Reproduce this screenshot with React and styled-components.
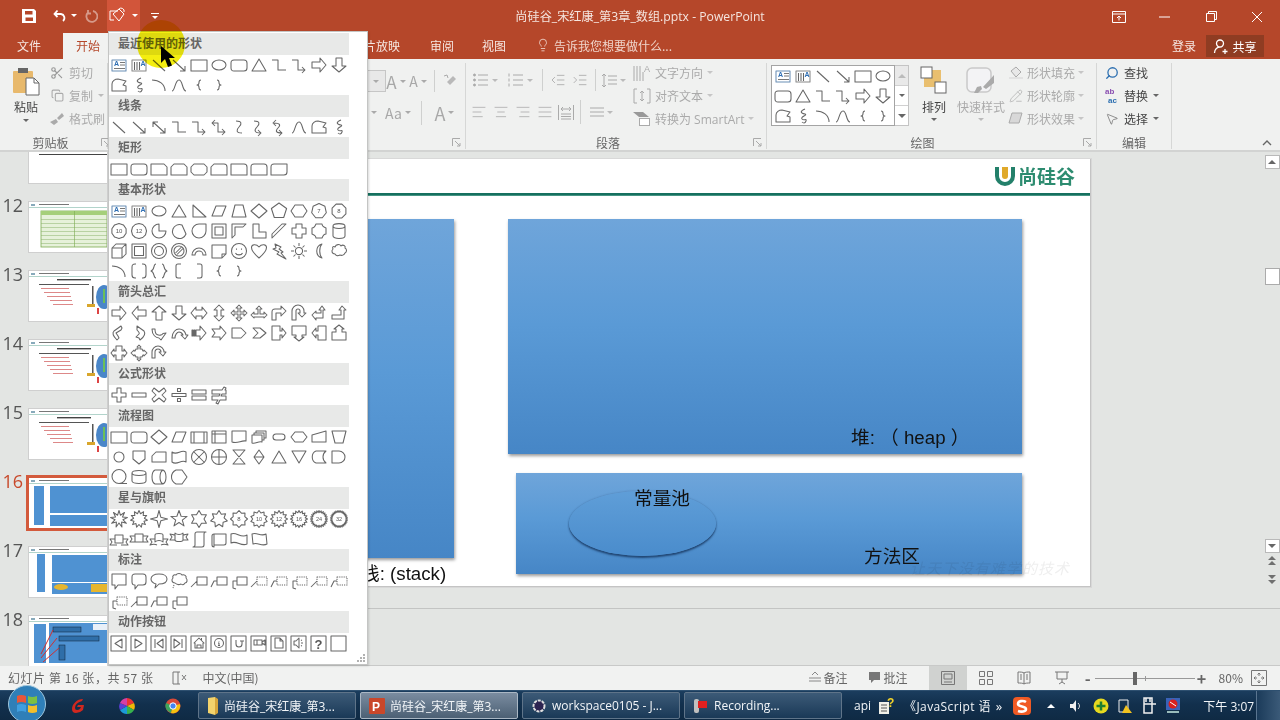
import React from 'react';
import styled, { createGlobalStyle } from 'styled-components';
import { AlignLeft, AlignCenter, AlignRight, AlignJustify, Scissors, Copy, Lightbulb, IndentDecrease, IndentIncrease, Search, MousePointer2, PencilLine } from 'lucide-react';

const CJK = '"Noto Sans CJK SC", "Liberation Sans", sans-serif';
const Global = createGlobalStyle`
  html, body { margin: 0; padding: 0; background: #e3e5e3; }
  * { box-sizing: border-box; }
  #root { width: 1280px; height: 720px; overflow: hidden; }
`;

/* ---------- geometry helpers for the shape glyphs ---------- */
const poly = (n, r = 7.5, rot = -90) => {
  const p = [];
  for (let i = 0; i < n; i++) {
    const a = ((rot + (360 / n) * i) * Math.PI) / 180;
    p.push(`${(10 + r * Math.cos(a)).toFixed(1)} ${(10 + r * Math.sin(a)).toFixed(1)}`);
  }
  return `M${p.join('L')}z`;
};
const star = (n, R = 8, r = 4.4) => {
  const p = [];
  for (let i = 0; i < n * 2; i++) {
    const a = ((-90 + (180 / n) * i) * Math.PI) / 180;
    const q = i % 2 ? r : R;
    p.push(`${(10 + q * Math.cos(a)).toFixed(1)} ${(10 + q * Math.sin(a)).toFixed(1)}`);
  }
  return `M${p.join('L')}z`;
};
const circ = (r, cx = 10, cy = 10) => `M${cx - r} ${cy}a${r} ${r} 0 1 0 ${r * 2} 0a${r} ${r} 0 1 0-${r * 2} 0z`;
const Num = ({ t, s = 6 }) => (
  <text x="10" y={10 + s * 0.36} fontSize={s} textAnchor="middle" fill="#555" stroke="none" fontFamily="Liberation Sans">{t}</text>
);
const withNum = (d, t, s) => (<><path d={d} /><Num t={t} s={s} /></>);
const dash = (solid, dashed) => (<><path d={solid} /><path d={dashed} strokeDasharray="1.2 1" /></>);

const textH = (
  <>
    <path d="M3 5h14v11H3z" stroke="#6b8fb5" />
    <text x="7.5" y="11" fontSize="7" fill="#2f6fb4" stroke="none" fontWeight="bold" textAnchor="middle" fontFamily="Liberation Sans">A</text>
    <path d="M11 7.5h5M11 10h5M5 13.5h11" stroke="#777" />
  </>
);
const textV = (
  <>
    <path d="M3 5h14v11H3z" stroke="#888" />
    <path d="M5.5 7v8M8 7v8M10.5 7v8" />
    <text x="14" y="11" fontSize="7" fill="#2f6fb4" stroke="none" fontWeight="bold" textAnchor="middle" fontFamily="Liberation Sans">A</text>
  </>
);

const S = {
  textH, textV,
  line: 'M4 5l12 11', arrow: 'M4 5l12 11m0-5v5h-5', dbl: 'M4 5l12 11m0-5v5h-5M4 10V5h5',
  elbow: 'M3 5h6v10h8', elbowA: 'M3 5h6v10h7m-3-3l3 3-3 3', elbowD: 'M6 3L3 6l3 3M3 6h6v9h7m-3-3l3 3-3 3',
  curveC: 'M7 4c6 0 6 3 3 6s-3 6 3 6', curveCA: 'M5 4c6 0 6 3 3 6s-3 6 4 6m-3-3l3 3-3 3',
  curveCD: 'M5 6c6 0 7 2 4 5s-2 5 4 5m-3-3l3 3-3 3M7 3L4 6l3 3',
  curve: 'M3 16c3 0 3-11 7-11s3 11 7 11', arc: 'M3 5c7 0 13 4 13 11',
  freeform: 'M3 16V9c0-3 3-5 6-5l8 2-3 4 3 1v5z', scribble: 'M12 3c-5 2-5 4 0 5 3 1-5 3-3 5s5-1 4 2-3 2-4 1',
  lbrace: 'M12 5c-2 0-2 1-2 2.500S10 10 8 10c2 0 2 1 2 2.500s0 2.500 2 2.500', rbrace: 'M8 5c2 0 2 1 2 2.500s0 2.500 2 2.500c-2 0-2 1-2 2.500s0 2.500-2 2.500',
  lbrack: 'M12 3H9Q7 3 7 5v10q0 2 2 2h3', rbrack: 'M8 3h3q2 0 2 2v10q0 2-2 2H8',
  bracks: 'M7 3H6Q3 3 3 6v8q0 3 3 3h1M13 3h1q3 0 3 3v8q0 3-3 3h-1',
  braces: 'M7 3C4 3 6 9 2 10c4 1 2 7 5 7M13 3c3 0 1 6 5 7-4 1-2 7-5 7',
  rect: 'M2 5h16v11H2z', round: 'M5 5h10q3 0 3 3v5q0 3-3 3H5q-3 0-3-3V8q0-3 3-3z',
  snip1: 'M2 5h13l3 3v8H2z', snip2: 'M5 5h10l3 3v8H2V8z', snipD: 'M5 5h10l3 3v5l-3 3H5l-3-3V8z', snipR: 'M5 5h10q3 0 3 3v8H2V8z',
  round1: 'M2 5h13q3 0 3 3v8H2z', round2: 'M5 5h10q3 0 3 3v8H2V8q0-3 3-3z', roundD: 'M5 5h13v8q0 3-3 3H2V8q0-3 3-3z',
  ellipse: 'M3 10a7 5 0 1 0 14 0a7 5 0 1 0-14 0z', tri: 'M10 4l7 12H3z', rtri: 'M4 4l13 12H4z', para: 'M7 5h10l-4 10H3z',
  trap: 'M6 4h8l3 12H3z', diamond: 'M10 3l8 7-8 7-8-7z', penta: poly(5, 8), hexa: 'M6 4h8l4 6-4 6H6l-4-6z',
  h7: withNum(poly(7, 7.5), '7'), o8: withNum(poly(8, 7.5, -67.5), '8'), d10: withNum(poly(10, 7.5), '10'), d12: withNum(poly(12, 7.5), '12'),
  pie: 'M10 3a7 7 0 1 0 7 7h-7z', chord: 'M13 4a7 7 0 1 0 4 9z', tear: 'M17 3v7a7 7 0 1 1-7-7z',
  frame: 'M3 3h14v14H3zM6 6v8h8V6z', half: 'M3 3h14l-3 3H6v8l-3 3z', lshape: 'M4 3h6v8h7v6H4z', diag: 'M3 13L13 3h4L3 17z',
  cross: 'M7 3h6v4h4v6h-4v4H7v-4H3V7h4z', plate: 'M7 3h6q0 2 2 3t2 1v6q-2 0-3 2t-1 2H7q0-2-2-3t-2-1V7q2 0 3-2t1-2z',
  can: 'M4 5a6 2.4 0 0 1 12 0v10a6 2.4 0 0 1-12 0zM4 5a6 2.4 0 0 0 12 0',
  cube: 'M3 7l4-4h10v10l-4 4H3zM3 7h10v10M13 7l4-4', bevel: 'M3 3h14v14H3zM5.5 5.5h9v9h-9z',
  donut: circ(7.5) + circ(4.5), nosym: circ(7.5) + circ(5) + 'M6.5 12l6-6M8 13.5l6-6',
  blockarc: 'M3 14a7 7 0 0 1 14 0h-3a4 4 0 0 0-8 0z', folded: 'M3 4h14v9l-4 4H3zM17 13h-4v4',
  smile: circ(7.5) + 'M6.5 12c1 2.5 6 2.5 7 0M7.5 7.5v1.2M12.5 7.5v1.2', heart: 'M10 17C3 11 2.5 8 2.5 6.5 2.5 3.5 7 2.5 10 6c3-3.5 7.500-2.500 7.500.5 0 1.500-.5 4.500-7.500 10.500z',
  bolt: 'M6 3l6 3-2 2 4 3-2 1 5 6-9-5 2-2-6-3 3-1z', sun: circ(3.6) + 'M10 2v3M10 15v3M2 10h3M15 10h3M4.500 4.500l2 2M13.500 13.500l2 2M4.500 15.500l2-2M13.500 6.500l2-2',
  moon: 'M13 3c-7 2-7 12 0 14-3-3-3-11 0-14z', cloud: 'M6 6c1-3 5-3 6-1 2-2 5 0 4 2 2 1 2 4 0 5-1 2-3 3-5 2-2 1-4 1-5-1-3 0-4-3-2-5-1-2 0-3 2-2z',
  aR: 'M3 7h8V3l6 7-6 7v-4H3z', aL: 'M17 7H9V3L3 10l6 7v-4h8z', aU: 'M7 17V9H3l7-6 7 6h-4v8z', aD: 'M7 3v8H3l7 6 7-6h-4V3z',
  aLR: 'M2 10l5-6v3h6V4l5 6-5 6v-3H7v3z', aUD: 'M10 2l5 5h-3v6h3l-5 5-5-5h3V7H5z',
  aQ: 'M10 2l3 3h-2v4h4V7l3 3-3 3v-2h-4v4h2l-3 3-3-3h2v-4H5v2l-3-3 3-3v2h4V5H7z', aLRU: 'M10 3l3 3h-2v5h4V9l3 3-3 3v-1H5v1l-3-3 3-3v2h4V6H7z',
  aBent: 'M3 17V9q0-3 3-3h6V3l5 5-5 5v-3H7v7z', aUt: 'M3 17V8a6 6 0 0 1 12 0v2h2l-4 4-4-4h2V8a2 2 0 0 0-4 0v9z',
  aLU: 'M3 12l4-4v2h5V7h-2l3-4 3 4h-2v8H7v2z', aBU: 'M3 12h9V7h-2l3-4 4 4h-2v9H3z',
  cR: 'M12 3L5 8c-2 2-1 5 3 9l2-2-1-2-2-3 5-3 1-2z', cL: 'M8 3l7 5c2 3 0 6-4 9l-1-2-3-1 3-3c1-1 0-2-2-4z',
  cU: 'M3 6c0 6 4 9 7 9l2 2 5-7-3 .5c-1 2-4 2-6 1S6 8 6 6z', cD: 'M3 15c0-6 4-9 7-9s6 2 7 6h2l-3 4-4-4h2c-1-2-2-3-4-3s-4 3-4 6z',
  sR: 'M3 7h1v6H3zM5 7h1v6H5zM7 7h4V3l6 7-6 7v-4H7z', nR: 'M3 6h8V3l6 7-6 7v-3H3l3-4z', home: 'M3 5h9l5 5-5 5H3z', chev: 'M4 5h7l6 5-6 5H4l5-5z',
  rC: 'M3 3h8v5h2V5l4 5-4 5v-3h-2v5H3z', dC: 'M3 3h14v9h-4v2h2l-5 4-5-4h2v-2H3z', lC: 'M17 3H9v5H7V5l-4 5 4 5v-3h2v5h8z', uC: 'M3 17h14V9h-4V6h2l-5-4-5 4h2v3H3z',
  lrC: 'M7 3h6v5h2V6l3 4-3 4v-2h-2v5H7v-5H5v2l-3-4 3-4v2h2z', qC: 'M10 2l2 2h-1v2h2l1 2h1V7l3 3-3 3v-1h-1l-1 2h-2v2h1l-2 2-2-2h1v-2H7l-1-2H5v1l-3-3 3-3v1h1l1-2h2V4H8z',
  circA: 'M3 15V9a6 6 0 0 1 12 0h2l-3 4-4-4h2a3 3 0 0 0-6 0v6z',
  eqP: 'M8 3h4v5h5v4h-5v5H8v-5H3V8h5z', eqM: 'M3 8h14v4H3z', eqX: 'M5 3l5 4 5-4 2 3-4 4 4 4-2 3-5-4-5 4-2-3 4-4-4-4z',
  eqD: 'M3 8.500h14v3H3zM8.500 3.500h3v3h-3zM8.500 13.500h3v3h-3z', eqE: 'M3 5h14v4H3zM3 11h14v4H3z', eqN: 'M3 5h10l2-3 2 1-1 2h1v4h-4l-1 2h5v4H11l-2 4-2-1 2-3H3v-4h7l1-2H3z',
  fPre: 'M2 5h16v11H2zM5 5v11M15 5v11', fInt: 'M3 4h14v12H3zM6 4v12M3 7h14', fDoc: 'M3 4h14v10c-5-1-8 3-14 1z',
  fMulti: 'M3 8h10v7c-4-1-6 2-10 1zM5 8V6h10v7h-2M7 6V4h10v7h-2', fTerm: 'M7 7h6a3 3 0 0 1 0 6H7a3 3 0 0 1 0-6z', fPrep: 'M6 5h8l4 5-4 5H6l-4-5z',
  fMI: 'M3 8l14-4v11H3z', fMO: 'M3 4h14l-3 12H6z', fConn: circ(5), fOff: 'M4 4h12v8l-6 5-6-5z', fCard: 'M7 5h10v10H3V9z',
  fTape: 'M3 5c5 4 9-3 14 0v10c-5-3-9 4-14 0z', fSum: circ(7.5) + 'M5 5l10 10M15 5L5 15', fOr: circ(7.5) + 'M10 2.500v15M2.500 10h15',
  fColl: 'M4 3h12L4 17h12z', fSort: 'M10 3l5 7-5 7-5-7zM5 10h10', fExt: 'M10 4l7 12H3z', fMrg: 'M3 4h14l-7 12z', fStore: 'M7 4h10c-4 3-4 9 0 12H7c-5-2-5-10 0-12z',
  fDelay: 'M3 4h7a6 6 0 0 1 0 12H3z', fSeq: circ(7, 10, 9.500) + 'M10 16.500h8', fDisk: 'M3 6a7 2.500 0 0 1 14 0v8a7 2.500 0 0 1-14 0zM3 6a7 2.500 0 0 0 14 0',
  fDirect: 'M6 3h8c4 2 4 12 0 14H6c-4-2-4-12 0-14zM14 3c-4 2-4 12 0 14', fDisp: 'M7 3h6l5 7-5 7H7c-6-3-6-11 0-14z',
  burst1: star(9, 8.500, 4), burst2: star(11, 8.500, 5.500), s4: star(4, 8.500, 2.500), s5: star(5, 8.500, 3.500), s6: star(6, 8.500, 5), s7: star(7, 8.500, 5.200),
  s8: withNum(star(8, 8.500, 6.300), '8'), s10: withNum(star(10, 8.500, 6.300), '10', 5.500), s12: withNum(star(12, 8.500, 6), '12', 5.500), s16: withNum(star(16, 8.500, 6.300), '16', 5.500), s24: withNum(star(24, 8.500, 6.500), '24', 5.500), s32: withNum(star(32, 8.500, 6.800), '32', 5.500),
  rU: 'M6 6h8v8H6zM6 10H1l2 3-2 3h7M14 10h5l-2 3 2 3h-7', rD: 'M6 5h8v8H6zM6 7H1l2 3-2 3h5M14 7h5l-2 3 2 3h-5',
  crU: 'M6 6c0-2 8-2 8 0v7c-2-2-6-2-8 0zM6 10H1l2 3-2 3c3-1 5-1 7 0M14 10h5l-2 3 2 3c-3-1-5-1-7 0', crD: 'M6 4c2 2 6 2 8 0v7c0 2-8 2-8 0zM6 6c-2 0-3-1-5-1l2 3-2 3h5M14 6c2 0 3-1 5-1l-2 3 2 3h-5',
  scrV: 'M6 5c0-2 1-2 2-2h9c-1 0-2 1-2 2v11c0 1-1 2-2 2H4c1 0 2-1 2-2z', scrH: 'M3 7c0-1 1-2 2-2h12v9c0 1-1 2-2 2H5v2c-1 0-2-1-2-2z M5 5v11',
  wave: 'M2 5c5-3 10 5 16 1v9c-6 3-10-4-16-1z', dwave: 'M3 5c5-2 9 3 14 0l1 10c-5 3-9-2-14 0z',
  cRect: 'M3 3h14v11H9l-3 4v-4H3z', cRnd: 'M6 3h8q3 0 3 3v5q0 3-3 3H9l-3 4v-4q-3 0-3-3V6q0-3 3-3z', cOval: 'M10 3c5 0 8 2 8 5s-3 5-8 5l-4 4 1-4c-3-1-5-2-5-5s3-5 8-5z',
  cCloud: dash('M6 12c-3 0-4-3-2-5-1-2 1-4 3-3 1-2 5-2 6 0 2-1 5 1 4 3 2 2 1 5-1 5-1 2-3 2-4 1-2 1-4 1-6-1z', 'M5 14l-1 3'),
  cL1: 'M8 6h10v8H8zM8 10l-6 6', cL2: 'M8 6h10v8H8zM8 10H5l-3 6', cL3: 'M8 6h10v8H8zM8 10H4v7l3 1',
  cD1: dash('M8 10l-6 6', 'M8 6h10v8H8z'), cD2: dash('M8 10H5l-3 6', 'M8 6h10v8H8z'), cD3: dash('M8 10H4v7l3 1', 'M8 6h10v8H8z'),
  btn: 'M2 3h15v15H2z',
  bBack: 'M2 3h15v15H2zM13 6v9L6 10.500z', bFwd: 'M2 3h15v15H2zM6 6v9l7-4.500z', bBeg: 'M2 3h15v15H2zM14 6v9L8 10.500zM6 6v9', bEnd: 'M2 3h15v15H2zM5 6v9l6-4.500zM13 6v9',
  bHome: 'M2 3h15v15H2zM10 5l-5 5h1v5h8v-5h1zM8 15v-3h4v3M12.500 5v2', bInfo: 'M2 3h15v15H2z' + circ(4.500) + 'M10 8v.6M9 10h1v2.200M9 12.500h2',
  bRet: 'M2 3h15v15H2zM7 7v4a3 3 0 0 0 6 0V8m-2 0h4', bMov: 'M2 3h15v15H2zM5 7h8v5H5zM13 9l3-2v5l-3-2M8 7v5', bDoc: 'M2 3h15v15H2zM6 5h5l3 3v7H6zM11 5v3h3',
  bSnd: 'M2 3h15v15H2zM5 8h2l3-3v10l-3-3H5zM12 7l1 .5M12 10h2M12 13l1-.5',
  bQ: (<><path d="M2 3h15v15H2z" /><text x="9.500" y="15.500" fontSize="13" fontWeight="bold" textAnchor="middle" fill="#555" stroke="none" fontFamily="Liberation Sans">?</text></>),
};

const sections = [
  ['最近使用的形状', 'textH textV line arrow rect ellipse round tri elbow elbowA aR aD freeform scribble arc curve lbrace rbrace'],
  ['线条', 'line arrow dbl elbow elbowA elbowD curveC curveCA curveCD curve freeform scribble'],
  ['矩形', 'rect round snip1 snip2 snipD snipR round1 round2 roundD'],
  ['基本形状', 'textH textV ellipse tri rtri para trap diamond penta hexa h7 o8 d10 d12 pie chord tear frame half lshape diag cross plate can cube bevel donut nosym blockarc folded smile heart bolt sun moon cloud arc bracks braces lbrack rbrack lbrace rbrace'],
  ['箭头总汇', 'aR aL aU aD aLR aUD aQ aLRU aBent aUt aLU aBU cR cL cU cD sR nR home chev rC dC lC uC lrC qC circA'],
  ['公式形状', 'eqP eqM eqX eqD eqE eqN'],
  ['流程图', 'rect round diamond para fPre fInt fDoc fMulti fTerm fPrep fMI fMO fConn fOff fCard fTape fSum fOr fColl fSort fExt fMrg fStore fDelay fSeq fDisk fDirect fDisp'],
  ['星与旗帜', 'burst1 burst2 s4 s5 s6 s7 s8 s10 s12 s16 s24 s32 rU rD crU crD scrV scrH wave dwave'],
  ['标注', 'cRect cRnd cOval cCloud cL1 cL2 cL3 cD1 cD2 cD3 cD1 cD2 cD3 cL1 cL2 cL3'],
  ['动作按钮', 'bBack bFwd bBeg bEnd bHome bInfo bRet bMov bDoc bSnd bQ btn'],
];

const Cell = styled.svg`
  width: 20px; height: 20px; display: block; flex: none;
  fill: none; stroke: #666; stroke-width: 1.05; stroke-linejoin: round;
`;
const Shape = ({ n }) => {
  const v = S[n];
  return <Cell viewBox="0 0 20 20">{typeof v === 'string' ? <path d={v} /> : v}</Cell>;
};

/* ---------- page frame ---------- */
const Page = styled.div`
  position: relative; width: 1280px; height: 720px; overflow: hidden;
  display: flex; flex-direction: column; font-family: ${CJK}; font-size: 12px; color: #444;
`;
const TitleBar = styled.div`
  height: 33px; background: #b5472a; display: grid; grid-template-columns: 1fr auto 1fr; align-items: start; color: #fff;
`;
const Qat = styled.div`display: flex; align-items: center; height: 31px; padding-left: 19px;`;
const QatBtn = styled.div`
  height: 31px; width: ${p => p.$w}px; display: flex; align-items: center; justify-content: center; gap: 4px;
  background: ${p => (p.$on ? '#d2553a' : 'transparent')}; opacity: ${p => (p.$dim ? 0.45 : 1)};
`;
const Caret = styled.i`
  display: inline-block; width: 0; height: 0; border-left: 3px solid transparent; border-right: 3px solid transparent;
  border-top: 3px solid ${p => p.$c || '#fff'}; flex: none; font-style: normal;
`;
const Title = styled.div`
  font-size: 12.2px; line-height: 33px; color: #f5e5df; white-space: nowrap; font-family: "Open Sans", ${CJK};
`;
const WinBtns = styled.div`display: flex; justify-content: flex-end; height: 33px; align-items: center;`;
const WinBtn = styled.div`width: 46px; display: flex; justify-content: center;`;

const TabBar = styled.div`height: 26px; background: #b5472a; display: flex; align-items: stretch; color: #f6e7e2;`;
const Tab = styled.div`
  width: ${p => p.$w}px; flex: none; display: flex; align-items: center; justify-content: center; font-size: 12px; padding-bottom: 2px;
  background: ${p => (p.$on ? '#f1f2f1' : 'transparent')}; color: ${p => (p.$on ? '#b5472a' : 'inherit')};
`;
const TellMe = styled.div`display: flex; align-items: center; gap: 4px; margin-left: 16px; font-size: 12px; color: #f0d5cb; padding-bottom: 2px;`;
const TabEnd = styled.div`margin-left: auto; display: flex; align-items: center; padding-right: 16px; gap: 10px;`;
const Login = styled.div`font-size: 12px; padding-bottom: 2px;`;
const Share = styled.div`
  width: 58px; height: 22px; display: flex; align-items: center; justify-content: center; gap: 3px; background: #8f3c22; color: #fff;
`;

/* ---------- ribbon ---------- */
const Ribbon = styled.div`
  position: relative; height: 93px; flex: none; background: #f0f1f0; border-bottom: 2px solid #d2d3d2; display: flex; padding: 4px 0 0;
`;
const Group = styled.div`
  position: relative; width: ${p => p.$w}px; flex: none; height: 86px; display: flex; flex-direction: column;
  border-right: 1px solid #d6d7d6;
`;
const GroupBody = styled.div`flex: 1; display: flex; min-height: 0; margin-top: -2px; justify-content: ${p => p.$end ? 'flex-end' : 'flex-start'}; padding: ${p => p.$pad || '0'};`;
const GroupLabel = styled.div`
  height: 16px; line-height: 16px; margin-bottom: -2px; text-align: center; color: #666; font-size: 12px; padding-right: ${p => p.$pr || 0}px;
`;
const Launcher = styled.svg`position: absolute; right: ${p => p.$r ?? 4}px; bottom: 2px; width: 9px; height: 9px; stroke: #aaa; fill: none;`;
const Big = styled.div`
  width: ${p => p.$w}px; flex: none; padding-top: 2px; margin-left: ${p => p.$ml || 0}px; display: flex; flex-direction: column; align-items: center; color: ${p => p.$c || '#444'}; font-size: 12px;
`;
const BigLabel = styled.div`line-height: 14px; margin-top: ${p => p.$mt || 4}px; white-space: nowrap;`;
const BigCaret = styled.div`margin-top: ${p => p.$mt || 5}px; height: 6px; display: flex;`;
const Col = styled.div`display: flex; flex-direction: column; width: ${p => p.$w ? p.$w + 'px' : 'auto'}; flex: none; margin-left: ${p => p.$ml || 0}px; padding-top: ${p => p.$pt || 0}px;`;
const SmallBtn = styled.div`
  height: 23px; display: flex; align-items: center; gap: ${p => p.$gap || 5}px; white-space: nowrap; color: ${p => p.$c || '#aaa'}; font-size: 12px;
`;
const SmallIcon = styled.div`width: ${p => p.$w || 16}px; display: flex; justify-content: center; flex: none;`;
const IconRow = styled.div`display: flex; align-items: center; height: ${p => p.$h || 32}px; color: #aaa; justify-content: ${p => p.$end ? 'flex-end' : 'flex-start'};`;
const IconBox = styled.div`width: ${p => p.$w}px; flex: none; display: flex; align-items: center; justify-content: center; gap: 3px; font-size: ${p => p.$fs || 12}px; color: #a8a8a8;`;
const Divider = styled.div`width: 1px; height: ${p => p.$h || 22}px; background: #cfd0cf; flex: none; margin: 0 ${p => p.$m || 4}px;`;
const ComboEnd = styled.div`
  width: 220px; height: 22px; background: #fff; border: 1px solid #c6c6c6; border-left: none; display: flex; justify-content: flex-end; flex: none;
`;
const ComboArrow = styled.div`width: 18px; background: #e8e8e8; display: flex; align-items: center; justify-content: center;`;
const GalleryWrap = styled.div`display: flex; margin: 4px 0 0 4px; height: 61px; flex: none;`;
const Gallery = styled.div`
  width: 124px; height: 61px; background: #fff; border: 1px solid #a4a4a4; display: flex; flex-wrap: wrap; align-content: flex-start; padding-left: 1px;
`;
const GalleryBar = styled.div`width: 14px; display: flex; flex-direction: column; background: #fff; border: 1px solid #c4c4c4; border-left: none;`;
const GalleryBtn = styled.div`
  flex: 1; display: flex; align-items: center; justify-content: center; border-bottom: 1px solid #d0d0d0; background: ${p => (p.$dim ? '#e9e9e9' : '#fff')};
  &:last-child { border-bottom: none; }
`;
const Collapse = styled.svg`position: absolute; right: 7px; bottom: 3px; width: 12px; height: 8px; fill: none; stroke: #666; stroke-width: 1.4;`;

/* ---------- main area ---------- */
const Main = styled.div`flex: 1; min-height: 0; display: flex; background: #e3e5e3;`;
const ThumbPane = styled.div`width: 108px; flex: none; overflow: hidden; border-right: 1px solid #d0d0d0;`;
const ThumbList = styled.div`margin-top: -19px;`;
const ThumbRow = styled.div`height: 69px; display: flex; align-items: flex-start;`;
const ThumbNum = styled.div`
  width: 23px; flex: none; margin-top: -9px; text-align: right; font: 18px/24px "Open Sans", sans-serif; color: ${p => (p.$on ? '#c8492b' : '#555')};
`;
const Thumb = styled.svg`
  width: 89px; height: 50px; flex: none; display: block; margin-left: 6px; background: #fff;
  outline: ${p => (p.$on ? '3px solid #d35a3c' : '1px solid #cfcfcf')}; outline-offset: 0;
`;
const SlideCol = styled.div`flex: 1; min-width: 0; display: flex; flex-direction: column;`;
const SlideRow = styled.div`height: 457px; flex: none; display: flex; border-bottom: 1px solid #c3c4c3;`;
const Stage = styled.div`flex: 1; min-width: 0; padding: 7px 0 0 221px;`;
const Slide = styled.div`
  position: relative; width: 762px; height: 428px; background: #fff; border-right: 1px solid #c4c4c4; border-bottom: 1px solid #c4c4c4; box-shadow: 0 0 0 1px #d8d8d8;
`;
const Rule = styled.div`position: absolute; left: 0; right: 0; top: 34px; height: 3px; background: linear-gradient(#16705f 0, #16705f 66%, #74b9a8 100%);`;
const Logo = styled.div`
  position: absolute; right: 15px; top: 5px; display: flex; align-items: center; gap: 2px; color: #2d8c70; font-size: 19px; font-weight: 700; line-height: 24px;
`;
const BlueBox = styled.div`
  position: absolute; left: ${p => p.$x}px; top: ${p => p.$y}px; width: ${p => p.$w}px; height: ${p => p.$h}px;
  background: linear-gradient(#6fa5da 0, #5a9ad6 45%, #4686c6 100%); box-shadow: 1px 2px 3px rgba(0,0,0,.4);
`;
const Ellipse = styled.div`
  position: absolute; left: 240px; top: 332px; width: 147px; height: 65px; border-radius: 50%;
  background: linear-gradient(#5f9ed8, #4a8ccc); box-shadow: 0 2px 2px rgba(20,50,90,.75), 0 0 2px rgba(30,60,100,.4);
`;
const SlideText = styled.div`
  position: absolute; left: ${p => p.$x}px; top: ${p => p.$y}px; font-family: "Liberation Sans", "Noto Sans CJK SC", sans-serif; font-size: 18.7px; line-height: 24px; color: #111; white-space: nowrap;
`;
const Watermark = styled.div`
  position: absolute; right: 20px; top: 399px; font-size: 15px; line-height: 20px; color: #efefef; mix-blend-mode: multiply; letter-spacing: 1px; font-style: italic; white-space: nowrap;
`;
const VBar = styled.div`width: 16px; flex: none; display: flex; flex-direction: column; align-items: center; padding-top: 3px;`;
const VBtn = styled.div`
  width: 15px; height: 14px; flex: none; background: #fff; border: 1px solid #b9b9b9; display: flex; align-items: center; justify-content: center;
`;
const VTrack = styled.div`flex: none; height: 370px; width: 15px; padding-top: 99px;`;
const VThumb = styled.div`width: 15px; height: 17px; background: #fff; border: 1px solid #ababab;`;
const VNav = styled.svg`width: 10px; height: 10px; fill: #707070; margin-top: ${p => p.$mt}px; flex: none;`;
const UpTri = styled.i`width: 0; height: 0; border-left: 4px solid transparent; border-right: 4px solid transparent; border-bottom: 4px solid ${p => p.$c || '#666'};`;
const DownTri = styled.i`width: 0; height: 0; border-left: 4px solid transparent; border-right: 4px solid transparent; border-top: 4px solid #666;`;
const Notes = styled.div`flex: 1; background: #e3e5e3; border-bottom: 1px solid #c8c9c8;`;

/* ---------- status bar ---------- */
const StatusBar = styled.div`height: 24px; flex: none; background: #f1f2f1; display: flex; align-items: center; color: #666; font-size: 12px;`;
const StatusText = styled.div`
  margin-left: ${p => p.$ml || 0}px; white-space: nowrap; display: flex; align-items: center; gap: 3px; font-family: ${CJK};
  letter-spacing: ${p => p.$ls || 0}px; padding-bottom: 1px;
`;
const ViewBtn = styled.div`
  width: 38px; height: 24px; display: flex; align-items: center; justify-content: center; background: ${p => (p.$on ? '#d0d2d0' : 'transparent')}; flex: none;
  margin-left: ${p => p.$ml || 0}px;
`;
const ZoomTrack = styled.div`position: relative; width: 100px; height: 1px; background: #999; flex: none; margin-left: 1px;`;
const ZoomKnob = styled.div`position: absolute; left: 38px; top: -6px; width: 4px; height: 13px; background: #666;`;
const ZoomMark = styled.div`position: absolute; left: 50px; top: -2px; width: 1px; height: 5px; background: #999;`;
const ZoomSign = styled.div`font-size: 16px; font-weight: 700; color: #666; width: ${p => p.$w}px; text-align: center; flex: none; line-height: 24px; margin-left: ${p => p.$ml || 0}px;`;

/* ---------- task bar ---------- */
const TaskBar = styled.div`
  height: 30px; flex: none; display: flex; align-items: center; color: #f2f5f8; font-size: 12px;
  background: linear-gradient(#1b3d5e 0, #12304d 45%, #0f2a44 100%); border-top: 1px solid #2e5070;
`;
const Orb = styled.div`width: 57px; flex: none; display: flex; padding-left: 8px; margin-top: -4px;`;
const TrayApp = styled.div`width: ${p => p.$w}px; flex: none; display: flex; justify-content: center;`;
const TaskBtn = styled.div`
  width: ${p => p.$w}px; height: 27px; flex: none; display: flex; align-items: center; gap: 5px; padding-left: 8px; margin-left: ${p => p.$ml || 0}px; white-space: nowrap; overflow: hidden;
  border: 1px solid ${p => (p.$on ? '#aab7c4' : '#5f7489')}; border-radius: 2px; font-family: "Open Sans", ${CJK};
  background: ${p => (p.$on ? 'linear-gradient(#7a8ca0, #4c6074)' : 'linear-gradient(#3c5a77, #1a3957)')};
`;
const TrayText = styled.div`margin-left: ${p => p.$ml || 0}px; white-space: nowrap; font-family: "Open Sans", ${CJK}; font-size: ${p => p.$fs || 12}px; flex: none; letter-spacing: ${p => p.$ls || 0}px;`;
const TrayIcon = styled.div`width: ${p => p.$w}px; flex: none; display: flex; justify-content: center;`;
const Desktop = styled.div`margin-left: auto; width: 24px; height: 29px; background: linear-gradient(90deg, #1b3b5a, #3b5a78); border-left: 1px solid #5a7590;`;

/* ---------- the open shape menu and the recording cursor ---------- */
const ShapeMenu = styled.div`
  position: absolute; left: 108px; top: 31px; width: 260px; height: 634px; background: #fff; border: 1px solid #c4c5c4; z-index: 5; padding: 1px 0 0 0;
  box-shadow: 1px 1px 2px rgba(0,0,0,.15);
`;
const MenuHead = styled.div`
  width: 240px; height: 22px; background: #e8e9e8; color: #666; font-weight: 700; font-size: 12px; line-height: 20px; padding-left: 9px;
  font-family: ${CJK};
`;
const MenuGrid = styled.div`display: flex; flex-wrap: wrap; width: 240px;`;
const Grip = styled.svg`position: absolute; right: 2px; bottom: 2px; width: 8px; height: 8px; fill: #999;`;
const Highlight = styled.div`
  position: absolute; left: 137px; top: 20px; width: 48px; height: 48px; border-radius: 50%; z-index: 6; background: #f4ee10; mix-blend-mode: multiply;
`;
const Pointer = styled.svg`position: absolute; left: 161px; top: 46px; width: 16px; height: 24px; z-index: 7;`;

const Glyph = styled.svg`display: block; flex: none; fill: none;`;
const thumbs = [
  { n: '', kind: 'text' }, { n: '12', kind: 'table' }, { n: '13', kind: 'code' }, { n: '14', kind: 'code' }, { n: '15', kind: 'code' },
  { n: '16', kind: 'blue', on: true }, { n: '17', kind: 'blue2' }, { n: '18', kind: 'blue3' },
];
const ThumbArt = ({ kind }) => {
  const head = (<><rect x="2" y="2" width="4" height="2" fill="#8ab" /><rect x="10" y="2" width="30" height="1" fill="#777" /><rect x="0" y="5" width="89" height=".6" fill="#7fb8a8" /></>);
  if (kind === 'text') return (<>
    <rect x="11" y="1" width="34" height="1.200" fill="#d77" /><rect x="16" y="5" width="30" height="1" fill="#daa" /><rect x="47" y="8" width="16" height="1" fill="#77c" />
    <rect x="10" y="18" width="70" height="1" fill="#444" /><rect x="10" y="21" width="70" height="1" fill="#444" />
  </>);
  if (kind === 'table') return (<>{head}
    <rect x="12" y="9" width="66" height="36" fill="#e6f1da" stroke="#7aaa4f" strokeWidth=".8" />
    <rect x="12" y="9" width="66" height="4" fill="#a5cf7a" />
    {[17, 21, 25, 29, 33, 37, 41].map(y => <rect key={y} x="12" y={y} width="66" height=".5" fill="#8bb36a" />)}
    <rect x="45" y="9" width=".6" height="36" fill="#7aaa4f" />
  </>);
  if (kind === 'code') return (<>{head}
    <rect x="28" y="8" width="34" height="1.400" fill="#444" />
    <rect x="10" y="13" width="50" height="1" fill="#555" />
    {[17, 21, 25, 29, 33].map((y, i) => <rect key={y} x={12 + i * 3} y={y} width={28 - i * 2} height="1" fill="#d88" />)}
    <rect x="63" y="15" width="1.500" height="20" fill="#555" /><rect x="58" y="33" width="8" height="3" fill="#d9a62c" />
    <ellipse cx="75" cy="26" rx="8" ry="12" fill="#4a86c8" /><rect x="74" y="18" width="2" height="14" fill="#6bbf59" />
    <rect x="68" y="37" width="2" height="6" fill="#d44" />
  </>);
  if (kind === 'blue') return (<>{head}
    <rect x="5" y="8" width="10" height="39" fill="#4f92d2" /><rect x="21" y="8" width="64" height="27" fill="#4f92d2" /><rect x="21" y="37" width="64" height="11" fill="#4f92d2" />
  </>);
  if (kind === 'blue2') return (<>{head}
    <rect x="8" y="7" width="8" height="38" fill="#4f92d2" /><rect x="23" y="8" width="62" height="27" fill="#4f92d2" /><rect x="23" y="36" width="62" height="11" fill="#4f92d2" />
    <ellipse cx="32" cy="40" rx="7" ry="3" fill="#e6b62e" /><rect x="62" y="37" width="23" height="8" fill="#e6b62e" />
  </>);
  return (<>{head}
    <rect x="5" y="8" width="12" height="39" fill="#4f92d2" /><rect x="20" y="7" width="66" height="40" fill="#4f92d2" />
    <rect x="24" y="11" width="28" height="5" fill="#2f6ea8" stroke="#123" strokeWidth=".5" /><rect x="30" y="20" width="40" height="5" fill="#2f6ea8" stroke="#123" strokeWidth=".5" /><rect x="30" y="29" width="6" height="15" fill="#2f6ea8" stroke="#123" strokeWidth=".5" />
    <path d="M12 38L24 14M12 42L28 22M14 46L30 32" stroke="#d03030" strokeWidth="1" fill="none" />
    <rect x="64" y="8" width="18" height="6" fill="#e8f0f8" />
  </>);
};

export default function App() {
  return (
    <Page>
      <Global />
      <TitleBar>
        <Qat>
          <QatBtn $w={20}>
            <Glyph width="16" height="16" viewBox="0 0 16 16">
              <path d="M1 1h12l2 2v12H1z" fill="#fff" />
              <path d="M4 3h7.500v3.500H4zM4.500 9.500h7.500V13H4.500z" fill="#b5472a" />
            </Glyph>
          </QatBtn>
          <QatBtn $w={12} />
          <QatBtn $w={28}>
            <Glyph width="14" height="14" viewBox="0 0 14 14" stroke="#fff" strokeWidth="1.800"><path d="M4.500 1.500L1.500 5l3 3M2 5h6a4 4 0 0 1 2 7" /></Glyph>
            <Caret />
          </QatBtn>
          <QatBtn $w={24} $dim>
            <Glyph width="14" height="14" viewBox="0 0 14 14" stroke="#fff" strokeWidth="1.800"><path d="M9 2a5.500 5.500 0 1 1-5 1.500M4 1v3.500h3" /></Glyph>
          </QatBtn>
          <QatBtn $w={4} />
          <QatBtn $w={33} $on>
            <Glyph width="19" height="17" viewBox="0 0 19 17" stroke="#fff" strokeWidth="1"><path d="M1 4h8M1 4v9h4M10 2l5 5-5 7-6-7zM15 5a3 3 0 0 0-5-3" /></Glyph>
            <Caret />
          </QatBtn>
          <QatBtn $w={30}>
            <Glyph width="8" height="8" viewBox="0 0 8 8" fill="#fff"><rect y="1" width="8" height="1" fill="#fff" /><path d="M1 4h6L4 7z" fill="#fff" /></Glyph>
          </QatBtn>
        </Qat>
        <Title>尚硅谷_宋红康_第3章_数组.pptx - PowerPoint</Title>
        <WinBtns>
          <WinBtn>
            <Glyph width="14" height="12" viewBox="0 0 14 12" stroke="#fff"><path d="M.5 .5h13v11H.5zM.5 3h13M7 9.500V5M5 7l2-2 2 2" /></Glyph>
          </WinBtn>
          <WinBtn>
            <Glyph width="12" height="2" viewBox="0 0 12 2" stroke="#fff"><path d="M0 1h11" /></Glyph>
          </WinBtn>
          <WinBtn>
            <Glyph width="11" height="11" viewBox="0 0 11 11" stroke="#fff"><path d="M.5 2.500h8v8h-8zM2.500 2.500v-2h8v8h-2" /></Glyph>
          </WinBtn>
          <WinBtn>
            <Glyph width="12" height="12" viewBox="0 0 12 12" stroke="#fff"><path d="M1 1l10 10M11 1L1 11" /></Glyph>
          </WinBtn>
        </WinBtns>
      </TitleBar>

      <TabBar>
        <Tab $w={58}>文件</Tab>
        <Tab $w={5} />
        <Tab $w={50} $on>开始</Tab>
        <Tab $w={211} />
        <Tab $w={92}>幻灯片放映</Tab>
        <Tab $w={52}>审阅</Tab>
        <Tab $w={52}>视图</Tab>
        <TellMe>
          <Lightbulb size={14} strokeWidth={1.400} color="#f3ddd5" />
          告诉我您想要做什么...
        </TellMe>
        <TabEnd>
          <Login>登录</Login>
          <Share>
            <Glyph width="16" height="17" viewBox="0 0 16 17" stroke="#fff" strokeWidth="1.300"><path d="M7 2a3.500 3.500 0 1 1 0 7 3.500 3.500 0 0 1 0-7zM1.500 15c0-4 3-6 5.500-6M12 11v5M9.500 13.500h5" /></Glyph>
            共享
          </Share>
        </TabEnd>
      </TabBar>

      <Ribbon>
        <Group $w={108}>
          <GroupBody>
            <Big $w={52}>
              <Glyph width="29" height="29" viewBox="0 0 29 29" style={{ marginTop: 4 }}>
                <rect x="1" y="4" width="20" height="22" rx="1" fill="#e8b96c" />
                <rect x="6" y="1" width="10" height="5" fill="#666" />
                <path d="M14 11h8l5 5v12H14z" fill="#fff" stroke="#666" />
                <path d="M22 11v5h5" stroke="#666" />
              </Glyph>
              <BigLabel $mt={4}>粘贴</BigLabel>
              <BigCaret><Caret $c="#666" /></BigCaret>
            </Big>
            <Col $ml={-2}>
              <SmallBtn><SmallIcon $w={14}><Scissors size={14} color="#999" /></SmallIcon>剪切</SmallBtn>
              <SmallBtn><SmallIcon $w={14}><Copy size={13} color="#aaa" /></SmallIcon>复制<Caret $c="#bbb" /></SmallBtn>
              <SmallBtn><SmallIcon $w={14}><Glyph width="14" height="12" viewBox="0 0 14 12"><path d="M0 9l6-3 2 3-4 3zM7 5l5-5 2 3-5 4z" fill="#aaa" /></Glyph></SmallIcon>格式刷</SmallBtn>
            </Col>
          </GroupBody>
          <GroupLabel $pr={6}>剪贴板</GroupLabel>
          <Launcher $r={-3} viewBox="0 0 9 9"><path d="M.5 8V.5H8M3 3l5 5M5 8h3V5" /></Launcher>
        </Group>

        <Group $w={358}>
          <GroupBody $end $pad="0 4px 0 0">
            <Col $pt={6}>
              <IconRow $h={28} $end>
                <ComboEnd><ComboArrow><Caret $c="#aaa" /></ComboArrow></ComboEnd>
                <IconBox $w={20} $fs={17}>A<Caret $c="#aaa" /></IconBox>
                <IconBox $w={24} $fs={14}>A<Caret $c="#aaa" /></IconBox>
                <Divider />
                <IconBox $w={22}>
                  <Glyph width="16" height="16" viewBox="0 0 16 16"><path d="M8 12l6-6-3-3-6 6z" fill="#b9b9b9" /><path d="M2 3l3-1 1 3" stroke="#aaa" /></Glyph>
                </IconBox>
              </IconRow>
              <IconRow $h={35} $end>
                <IconBox $w={14}><Caret $c="#aaa" /></IconBox>
                <IconBox $w={34} $fs={14}>Aa<Caret $c="#aaa" /></IconBox>
                <Divider $h={24} $m={6} />
                <IconBox $w={33} $fs={18}>A<Caret $c="#aaa" /></IconBox>
              </IconRow>
            </Col>
          </GroupBody>
          <GroupLabel />
          <Launcher viewBox="0 0 9 9"><path d="M.5 8V.5H8M3 3l5 5M5 8h3V5" /></Launcher>
        </Group>

        <Group $w={301}>
          <GroupBody $pad="0 0 0 2px">
            <Col $pt={5} $w={165}>
              <IconRow $h={28}>
                <IconBox $w={34}>
                  <Glyph width="16" height="14" viewBox="0 0 16 14" stroke="#aaa"><path d="M5 2h10M5 7h10M5 12h10" /><circle cx="1.500" cy="2" r="1" fill="#aaa" /><circle cx="1.500" cy="7" r="1" fill="#aaa" /><circle cx="1.500" cy="12" r="1" fill="#aaa" /></Glyph><Caret $c="#bbb" />
                </IconBox>
                <IconBox $w={36}>
                  <Glyph width="16" height="14" viewBox="0 0 16 14" stroke="#aaa"><path d="M5 2h10M5 7h10M5 12h10M1 .5v3M1 5.500v3M1 10.500v3" /></Glyph><Caret $c="#bbb" />
                </IconBox>
                <Divider />
                <IconBox $w={22}><IndentDecrease size={16} color="#aaa" strokeWidth={1.300} /></IconBox>
                <IconBox $w={22}><IndentIncrease size={16} color="#aaa" strokeWidth={1.300} /></IconBox>
                <Divider />
                <IconBox $w={26}>
                  <Glyph width="16" height="15" viewBox="0 0 16 15" stroke="#aaa"><path d="M3 1v13M1 3l2-2 2 2M1 12l2 2 2-2M7 3h9M7 7h9M7 11h9" /></Glyph><Caret $c="#bbb" />
                </IconBox>
              </IconRow>
              <IconRow $h={36}>
                <IconBox $w={22}><AlignLeft size={16} color="#aaa" strokeWidth={1.200} /></IconBox>
                <IconBox $w={22}><AlignCenter size={16} color="#aaa" strokeWidth={1.200} /></IconBox>
                <IconBox $w={22}><AlignRight size={16} color="#aaa" strokeWidth={1.200} /></IconBox>
                <IconBox $w={22}><AlignJustify size={16} color="#aaa" strokeWidth={1.200} /></IconBox>
                <IconBox $w={20}>
                  <Glyph width="16" height="17" viewBox="0 0 16 17" stroke="#aaa"><path d="M.5 1v15M15.500 1v15M3 5h10M5 3L3 5l2 2M11 3l2 2-2 2M3 10h10M3 12.500h10M3 15h10" /></Glyph>
                </IconBox>
                <Divider $h={24} />
                <IconBox $w={32}>
                  <Glyph width="14" height="14" viewBox="0 0 14 14" stroke="#aaa"><path d="M0 3h14M0 7h14M0 11h14" /></Glyph><Caret $c="#bbb" />
                </IconBox>
              </IconRow>
            </Col>
            <Col>
              <SmallBtn $gap={4}>
                <Glyph width="18" height="18" viewBox="0 0 18 18" stroke="#aaa"><path d="M1 2v15M4 2v15M7 2v15M10 8v9" /><text x="11" y="8" fontSize="9" fill="#aaa" stroke="none" fontFamily="Liberation Sans">A</text></Glyph>
                文字方向 <Caret $c="#c6c6c6" />
              </SmallBtn>
              <SmallBtn $gap={4}>
                <Glyph width="18" height="16" viewBox="0 0 18 16" stroke="#aaa"><path d="M4 1H1v14h3M14 1h3v14h-3M9 3v10M7 5l2-2 2 2M7 11l2 2 2-2" /></Glyph>
                对齐文本 <Caret $c="#c6c6c6" />
              </SmallBtn>
              <SmallBtn $gap={4}>
                <Glyph width="18" height="16" viewBox="0 0 18 16"><path d="M0 1h10l6 5H6z" fill="#999" /><rect x="6.500" y="7.500" width="10" height="7" fill="#fff" stroke="#aaa" /></Glyph>
                <span style={{ fontFamily: `"Open Sans", ${CJK}` }}>转换为 SmartArt</span> <Caret $c="#c6c6c6" />
              </SmallBtn>
            </Col>
          </GroupBody>
          <GroupLabel $pr={16}>段落</GroupLabel>
          <Launcher viewBox="0 0 9 9"><path d="M.5 8V.5H8M3 3l5 5M5 8h3V5" /></Launcher>
        </Group>

        <Group $w={330}>
          <GroupBody>
            <GalleryWrap>
              <Gallery>
                {'textH textV line arrow rect ellipse round tri elbow elbowA aR aD freeform scribble arc curve lbrace rbrace'.split(' ').map((n, i) => <Shape key={i} n={n} />)}
              </Gallery>
              <GalleryBar>
                <GalleryBtn $dim><UpTri $c="#bbb" /></GalleryBtn>
                <GalleryBtn><Caret $c="#666" /></GalleryBtn>
                <GalleryBtn><DownTri /></GalleryBtn>
              </GalleryBar>
            </GalleryWrap>
            <Big $w={50}>
              <Glyph width="28" height="28" viewBox="0 0 28 28" style={{ marginTop: 3 }}>
                <rect x="4" y="4" width="17" height="17" fill="#e9bf6f" />
                <rect x="1" y="1" width="11" height="11" fill="#fff" stroke="#666" />
                <rect x="15" y="16" width="11" height="11" fill="#fff" stroke="#666" />
              </Glyph>
              <BigLabel $mt={6}>排列</BigLabel>
              <BigCaret $mt={4}><Caret $c="#666" /></BigCaret>
            </Big>
            <Big $w={48} $ml={-2} $c="#aaa">
              <Glyph width="30" height="28" viewBox="0 0 30 28" style={{ marginTop: 4 }}>
                <rect x="1" y="1" width="24" height="24" rx="5" fill="#f3f3f5" stroke="#c9c9c9" strokeWidth="1.500" />
                <path d="M8 26l3-6 4-1 1 3-4 4zM17 20l11-12v8l-8 6z" fill="#aaa" />
              </Glyph>
              <BigLabel $mt={5}>快速样式</BigLabel>
              <BigCaret $mt={4}><Caret $c="#bbb" /></BigCaret>
            </Big>
            <Col $ml={2}>
              <SmallBtn $gap={3}>
                <SmallIcon $w={17}><Glyph width="16" height="14" viewBox="0 0 16 14"><path d="M3 5l5-4 5 5-5 5z" fill="#e8e8e8" stroke="#aaa" /><rect x="1" y="11" width="14" height="2" fill="#e2e2e2" /></Glyph></SmallIcon>
                形状填充 <Caret $c="#c6c6c6" />
              </SmallBtn>
              <SmallBtn $gap={3}>
                <SmallIcon $w={17}><PencilLine size={14} color="#aaa" strokeWidth={1.200} /></SmallIcon>
                形状轮廓 <Caret $c="#c6c6c6" />
              </SmallBtn>
              <SmallBtn $gap={3}>
                <SmallIcon $w={17}><Glyph width="15" height="13" viewBox="0 0 15 13"><path d="M4 1h10l-3 10H1z" fill="#d8d8d8" stroke="#aaa" /></Glyph></SmallIcon>
                形状效果 <Caret $c="#c6c6c6" />
              </SmallBtn>
            </Col>
          </GroupBody>
          <GroupLabel $pr={18}>绘图</GroupLabel>
          <Launcher viewBox="0 0 9 9"><path d="M.5 8V.5H8M3 3l5 5M5 8h3V5" /></Launcher>
        </Group>

        <Group $w={75}>
          <GroupBody $pad="0 0 0 8px">
            <Col>
              <SmallBtn $c="#444" $gap={5}><SmallIcon $w={14}><Search size={14} color="#2c6fb0" strokeWidth={2.200} style={{ transform: 'scaleX(-1)' }} /></SmallIcon>查找</SmallBtn>
              <SmallBtn $c="#444" $gap={5}>
                <SmallIcon $w={14}>
                  <Glyph width="16" height="18" viewBox="0 0 16 18"><text x="1" y="7" fontSize="8" fontWeight="bold" fill="#8a4fb0" fontFamily="Liberation Sans">ab</text><text x="4" y="16" fontSize="8" fontWeight="bold" fill="#2c6fb0" fontFamily="Liberation Sans">ac</text></Glyph>
                </SmallIcon>
                替换 <Caret $c="#666" />
              </SmallBtn>
              <SmallBtn $c="#444" $gap={5}><SmallIcon $w={14}><MousePointer2 size={14} color="#666" strokeWidth={1.200} /></SmallIcon>选择<Caret $c="#666" /></SmallBtn>
            </Col>
          </GroupBody>
          <GroupLabel>编辑</GroupLabel>
        </Group>
        <Collapse viewBox="0 0 12 8"><path d="M2 6l4-4 4 4" /></Collapse>
      </Ribbon>

      <Main>
        <ThumbPane>
          <ThumbList>
            {thumbs.map((t, i) => (
              <ThumbRow key={i}>
                <ThumbNum $on={t.on}>{t.n}</ThumbNum>
                <Thumb $on={t.on} viewBox="0 0 89 50"><ThumbArt kind={t.kind} /></Thumb>
              </ThumbRow>
            ))}
          </ThumbList>
        </ThumbPane>
        <SlideCol>
          <SlideRow>
            <Stage>
              <Slide>
                <Logo>
                  <Glyph width="22" height="22" viewBox="0 0 22 22">
                    <path d="M1 2v9a10 10 0 0 0 20 0V2h-4v9a6 6 0 0 1-12 0V2z" fill="#23806a" />
                    <path d="M8 2v9a3 3 0 0 0 6 0V2z" fill="#e0a92a" />
                  </Glyph>
                  尚硅谷
                </Logo>
                <Rule />
                <BlueBox $x={20} $y={60} $w={105} $h={339} />
                <BlueBox $x={179} $y={60} $w={514} $h={235} />
                <BlueBox $x={187} $y={314} $w={506} $h={101} />
                <Ellipse />
                <SlideText $x={522} $y={267}>堆: （ heap ）</SlideText>
                <SlideText $x={305} $y={328}>常量池</SlideText>
                <SlideText $x={535} $y={386}>方法区</SlideText>
                <SlideText $x={32} $y={403}>栈: (stack)</SlideText>
                <Watermark>让天下没有难学的技术</Watermark>
              </Slide>
            </Stage>
            <VBar>
              <VBtn><UpTri /></VBtn>
              <VTrack><VThumb /></VTrack>
              <VBtn><DownTri /></VBtn>
              <VNav $mt={3} viewBox="0 0 10 10"><path d="M1 4l4-4 4 4zM1 9l4-4 4 4z" /></VNav>
              <VNav $mt={8} viewBox="0 0 10 10"><path d="M1 1l4 4 4-4zM1 6l4 4 4-4z" /></VNav>
            </VBar>
          </SlideRow>
          <Notes />
        </SlideCol>
      </Main>

      <StatusBar>
        <StatusText $ml={8} $ls={0.55}>幻灯片 第 16 张，共 57 张</StatusText>
        <StatusText $ml={18}>
          <Glyph width="16" height="14" viewBox="0 0 16 14" stroke="#777"><path d="M7 1H2v12h5M7 1v12M7 1h2M7 13h2M11 4l4 5M15 4l-4 5" /></Glyph>
        </StatusText>
        <StatusText $ml={15}>中文(中国)</StatusText>
        <StatusText $ml={550}>
          <Glyph width="12" height="13" viewBox="0 0 12 13" stroke="#888"><path d="M0 7h12M0 10h12M3 4l3-3 3 3" /></Glyph>备注
        </StatusText>
        <StatusText $ml={20}>
          <Glyph width="13" height="13" viewBox="0 0 13 13"><path d="M1 1h11v8H6l-3 3V9H1z" fill="#777" /></Glyph>批注
        </StatusText>
        <ViewBtn $on $ml={21}>
          <Glyph width="14" height="14" viewBox="0 0 14 14" stroke="#777"><path d="M.5 .5h13v13H.5zM3 3h8v5H3zM3 11h8" /></Glyph>
        </ViewBtn>
        <ViewBtn>
          <Glyph width="14" height="14" viewBox="0 0 14 14" stroke="#777"><path d="M.5 .5h5v5h-5zM8.500 .5h5v5h-5zM.5 8.500h5v5h-5zM8.500 8.500h5v5h-5z" /></Glyph>
        </ViewBtn>
        <ViewBtn>
          <Glyph width="14" height="14" viewBox="0 0 14 14" stroke="#777"><path d="M1 1c2 0 5 0 6 1 1-1 4-1 6-1v11c-2 0-5 0-6 1-1-1-4-1-6-1zM7 2v11M3 4h2M3 6h2M3 8h2M9 4h2M9 6h2M9 8h2" /></Glyph>
        </ViewBtn>
        <ViewBtn>
          <Glyph width="14" height="14" viewBox="0 0 14 14" stroke="#777"><path d="M0 1h14M2 1v7h10V1M7 8v3M4 13l3-2 3 2" /></Glyph>
        </ViewBtn>
        <ZoomSign $w={12} $ml={1}>-</ZoomSign>
        <ZoomTrack><ZoomKnob /><ZoomMark /></ZoomTrack>
        <ZoomSign $w={14}>+</ZoomSign>
        <StatusText $ml={10}>80%</StatusText>
        <StatusText $ml={8}>
          <Glyph width="16" height="16" viewBox="0 0 16 16" stroke="#777"><path d="M.5 .5h15v15H.5zM8 3v3M6.500 4.500L8 3l1.500 1.500M8 13v-3M6.500 11.500L8 13l1.500-1.500M3 8h3M4.500 6.500L3 8l1.500 1.500M13 8h-3M11.500 6.500L13 8l-1.500 1.500" /></Glyph>
        </StatusText>
      </StatusBar>

      <TaskBar>
        <Orb>
          <Glyph width="38" height="38" viewBox="0 0 38 38">
            <circle cx="19" cy="19" r="18.500" fill="#2f7fb8" stroke="#9fc6dd" />
            <path d="M9 11q4-2 9 0v7q-5-2-9 0z" fill="#e8563a" />
            <path d="M20 11q4 2 9 0v7q-5 2-9 0z" fill="#7cc043" />
            <path d="M9 20q4-2 9 0v7q-5-2-9 0z" fill="#3f9fe0" />
            <path d="M20 20q4 2 9 0v7q-5 2-9 0z" fill="#f4bf2c" />
          </Glyph>
        </Orb>
        <TrayApp $w={42}>
          <Glyph width="14" height="16" viewBox="0 0 14 16"><path d="M12 1C6 1 1 6 1 11q0 4 4 4 4 0 7-3l1-5H7L6 9h4q-1 3-4 3-2 0-2-2 0-5 7-7z" fill="#d0281f" /></Glyph>
        </TrayApp>
        <TrayApp $w={56}>
          <Glyph width="16" height="18" viewBox="0 0 16 18">
            <path d="M8 9L8 1a8 8 0 0 1 7 5z" fill="#e33" /><path d="M8 9l7-3a8 8 0 0 1 0 7z" fill="#f2b705" /><path d="M8 9l7 4a8 8 0 0 1-7 4z" fill="#37b24d" /><path d="M8 9v8a8 8 0 0 1-7-4z" fill="#1c9bd8" /><path d="M8 9l-7 4a8 8 0 0 1 0-7z" fill="#5a3fd6" /><path d="M8 9L1 6a8 8 0 0 1 7-5z" fill="#d63fa6" />
          </Glyph>
        </TrayApp>
        <TrayApp $w={36}>
          <Glyph width="16" height="16" viewBox="0 0 16 16">
            <circle cx="8" cy="8" r="7.500" fill="#d94a38" /><path d="M8 8L1 5a7.500 7.500 0 0 0 5 10z" fill="#3ba55c" /><path d="M8 8l-2 7a7.500 7.500 0 0 0 9-9z" fill="#f4c20d" /><circle cx="8" cy="8" r="3.200" fill="#4285f4" stroke="#fff" />
          </Glyph>
        </TrayApp>
        <TaskBtn $w={158} $ml={7}>
          <Glyph width="12" height="20" viewBox="0 0 12 20"><path d="M1 2l7-1v18l-7-2z" fill="#f3d36c" /><path d="M8 1l3 2v14l-3 2z" fill="#d7a63b" /></Glyph>
          尚硅谷_宋红康_第3...
        </TaskBtn>
        <TaskBtn $w={158} $ml={4} $on>
          <Glyph width="16" height="16" viewBox="0 0 16 16"><rect width="16" height="16" rx="1" fill="#c9472a" /><text x="3" y="13" fontSize="12" fontWeight="bold" fill="#fff" fontFamily="Liberation Sans">P</text></Glyph>
          尚硅谷_宋红康_第3...
        </TaskBtn>
        <TaskBtn $w={158} $ml={4}>
          <Glyph width="16" height="16" viewBox="0 0 16 16" stroke="#e0e0e0" strokeWidth="2"><circle cx="8" cy="8" r="5.500" fill="#2c2350" strokeDasharray="3 1" /></Glyph>
          workspace0105 - J...
        </TaskBtn>
        <TaskBtn $w={158} $ml={4}>
          <Glyph width="16" height="18" viewBox="0 0 16 18"><rect x="1" y="2" width="5" height="14" rx="2" fill="#c0c0c0" /><rect x="5" y="4" width="9" height="7" fill="#e02020" /></Glyph>
          Recording...
        </TaskBtn>
        <TrayText $ml={12}>api</TrayText>
        <TrayIcon $w={30}>
          <Glyph width="16" height="18" viewBox="0 0 16 18"><path d="M1 5h10v12H1z" fill="#f0f0e8" /><path d="M3 8h6M3 11h6M3 14h6" stroke="#555" /><text x="9" y="10" fontSize="12" fontWeight="bold" fill="#f2d32b" fontFamily="Liberation Sans">?</text></Glyph>
        </TrayIcon>
        <TrayText $ml={3} $ls={0.4}>《JavaScript 语</TrayText>
        <TrayText $ml={5} $fs={13}>»</TrayText>
        <TrayIcon $w={40}>
          <Glyph width="18" height="18" viewBox="0 0 18 18"><rect width="18" height="18" rx="4" fill="#f05a24" /><path d="M13 5c-3-2-8-1-8 2s8 2 8 5-5 3-8 2" stroke="#fff" strokeWidth="2.600" /></Glyph>
        </TrayIcon>
        <TrayIcon $w={18}><UpTri $c="#fff" /></TrayIcon>
        <TrayIcon $w={32}>
          <Glyph width="12" height="14" viewBox="0 0 12 14"><path d="M0 5h3l3-4v12l-3-4H0z" fill="#f0f0f0" /><path d="M8 4c2 2 2 4 0 6" stroke="#ddd" /></Glyph>
        </TrayIcon>
        <TrayIcon $w={17}>
          <Glyph width="16" height="16" viewBox="0 0 16 16"><circle cx="8" cy="8" r="7.500" fill="#e7d91f" /><path d="M8 3.500v9M3.500 8h9" stroke="#1e7f2e" strokeWidth="2.500" /></Glyph>
        </TrayIcon>
        <TrayIcon $w={32}>
          <Glyph width="15" height="17" viewBox="0 0 15 17"><path d="M1 3h9v12H1z" stroke="#eee" /><path d="M8 8l6 8H4z" fill="#f2c21f" /></Glyph>
        </TrayIcon>
        <TrayIcon $w={16}>
          <Glyph width="14" height="17" viewBox="0 0 14 17"><path d="M2 1v15h8V1zM4 1v4M8 1v4M2 7h12" stroke="#f0f0f0" strokeWidth="1.500" /></Glyph>
        </TrayIcon>
        <TrayIcon $w={32}>
          <Glyph width="16" height="18" viewBox="0 0 16 18"><rect x="1" y="1" width="14" height="12" fill="#3a62b8" /><circle cx="8" cy="7" r="4.500" fill="#d82020" /><path d="M5 5l6 4" stroke="#fff" /><path d="M2 15h12" stroke="#9bb" strokeWidth="2" /></Glyph>
        </TrayIcon>
        <TrayText $ml={14}>下午 3:07</TrayText>
        <Desktop />
      </TaskBar>

      <ShapeMenu>
        {sections.map(([title, list]) => (
          <React.Fragment key={title}>
            <MenuHead>{title}</MenuHead>
            <MenuGrid>
              {list.split(' ').map((n, i) => <Shape key={i} n={n} />)}
            </MenuGrid>
          </React.Fragment>
        ))}
        <Grip viewBox="0 0 8 8"><circle cx="7" cy="1" r="1" /><circle cx="7" cy="4" r="1" /><circle cx="4" cy="4" r="1" /><circle cx="7" cy="7" r="1" /><circle cx="4" cy="7" r="1" /><circle cx="1" cy="7" r="1" /></Grip>
      </ShapeMenu>
      <Highlight />
      <Pointer viewBox="0 0 16 24"><path d="M0 0v17l4-4 3 8 4-1.500-3-7.500h6z" fill="#000" /></Pointer>
    </Page>
  );
}
